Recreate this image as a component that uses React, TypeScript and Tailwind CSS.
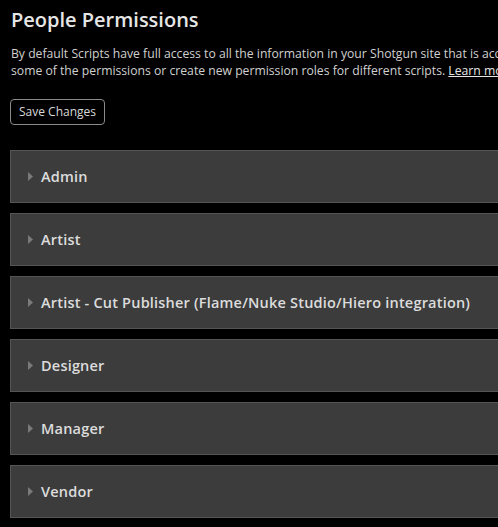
const roles = [
  "Admin",
  "Artist",
  "Artist - Cut Publisher (Flame/Nuke Studio/Hiero integration)",
  "Designer",
  "Manager",
  "Vendor",
];

function RoleRow({ name }: { name: string }) {
  return (
    <div className="h-[53px] bg-[#3c3c3c] border border-[#555555] flex items-center pl-[17px] gap-[8px]">
      <svg width="5" height="9" viewBox="0 0 5 9" className="shrink-0">
        <path d="M0 0 L5 4.5 L0 9 Z" fill="#7a7a7a" />
      </svg>
      <span className="text-[14.5px] tracking-[0.2px] font-semibold text-[#dcdcdc] whitespace-nowrap">{name}</span>
    </div>
  );
}

export default function App() {
  return (
    <div className="w-[498px] h-[527px] overflow-hidden bg-black" style={{ fontFamily: '"Open Sans", sans-serif' }}>
      <div className="w-[760px] pl-[10px] pt-[6px]">
        <h1 className="text-[20px] font-semibold text-[#e6e6e6] leading-[28px] pl-[1px]">People Permissions</h1>
        <p className="mt-[11px] text-[12.2px] leading-[17px] text-[#d0d0d0] whitespace-nowrap pl-[1px]">
          By default Scripts have full access to all the information in your Shotgun site that is accessible via the API. You can restrict
          <br />
          some of the permissions or create new permission roles for different scripts.{" "}
          <a className="underline text-[#e6e6e6]">Learn more</a>
        </p>
        <button className="mt-[20px] h-[26px] px-[8px] border border-[#8a8a8a] rounded-[4px] text-[12px] text-[#d8d8d8]">
          Save Changes
        </button>
        <div className="mt-[25px] flex flex-col gap-[10px]">
          {roles.map((r) => (
            <RoleRow key={r} name={r} />
          ))}
        </div>
      </div>
    </div>
  );
}
